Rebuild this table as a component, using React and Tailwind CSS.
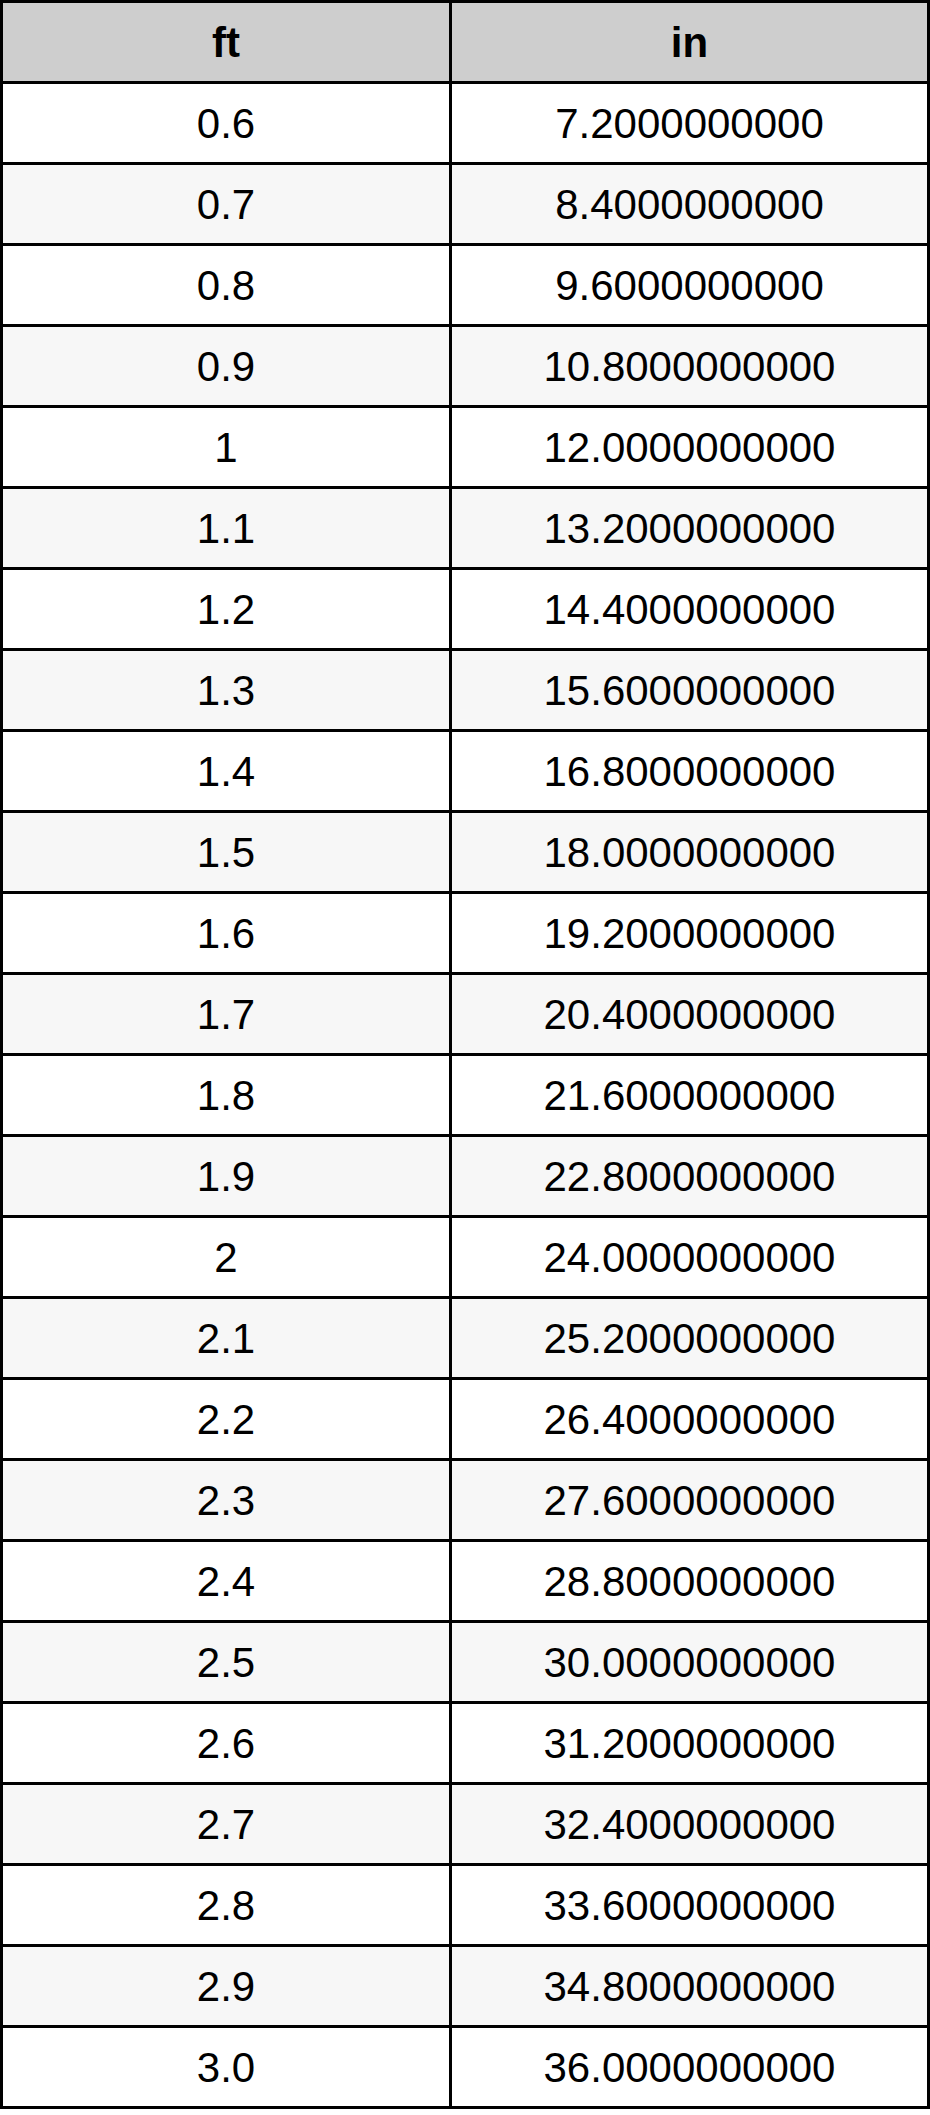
const rows = [
  ["0.6", "7.2000000000"],
  ["0.7", "8.4000000000"],
  ["0.8", "9.6000000000"],
  ["0.9", "10.8000000000"],
  ["1", "12.0000000000"],
  ["1.1", "13.2000000000"],
  ["1.2", "14.4000000000"],
  ["1.3", "15.6000000000"],
  ["1.4", "16.8000000000"],
  ["1.5", "18.0000000000"],
  ["1.6", "19.2000000000"],
  ["1.7", "20.4000000000"],
  ["1.8", "21.6000000000"],
  ["1.9", "22.8000000000"],
  ["2", "24.0000000000"],
  ["2.1", "25.2000000000"],
  ["2.2", "26.4000000000"],
  ["2.3", "27.6000000000"],
  ["2.4", "28.8000000000"],
  ["2.5", "30.0000000000"],
  ["2.6", "31.2000000000"],
  ["2.7", "32.4000000000"],
  ["2.8", "33.6000000000"],
  ["2.9", "34.8000000000"],
  ["3.0", "36.0000000000"],
];

export default function App() {
  return (
    <div className="w-[930px] min-h-[2115px] bg-white text-black font-['Liberation_Sans',Arial,sans-serif]">
      <div className="grid grid-cols-[449px_478px] border-t-[3px] border-l-[3px] border-black">
        {/* Header */}
        <div className="h-[81px] flex items-center justify-center bg-[#cecece] border-r-[3px] border-b-[3px] border-black text-[42px] font-bold">
          ft
        </div>
        <div className="h-[81px] flex items-center justify-center bg-[#cecece] border-r-[3px] border-b-[3px] border-black text-[42px] font-bold">
          in
        </div>

        {rows.map(([ft, inch], i) => {
          const bg = i % 2 === 0 ? "bg-white" : "bg-[#f7f7f7]";
          return [
            <div
              key={`ft-${i}`}
              className={`h-[81px] flex items-center justify-center border-r-[3px] border-b-[3px] border-black text-[42px] ${bg}`}
            >
              {ft}
            </div>,
            <div
              key={`in-${i}`}
              className={`h-[81px] flex items-center justify-center border-r-[3px] border-b-[3px] border-black text-[42px] ${bg}`}
            >
              {inch}
            </div>,
          ];
        })}
      </div>
    </div>
  );
}
